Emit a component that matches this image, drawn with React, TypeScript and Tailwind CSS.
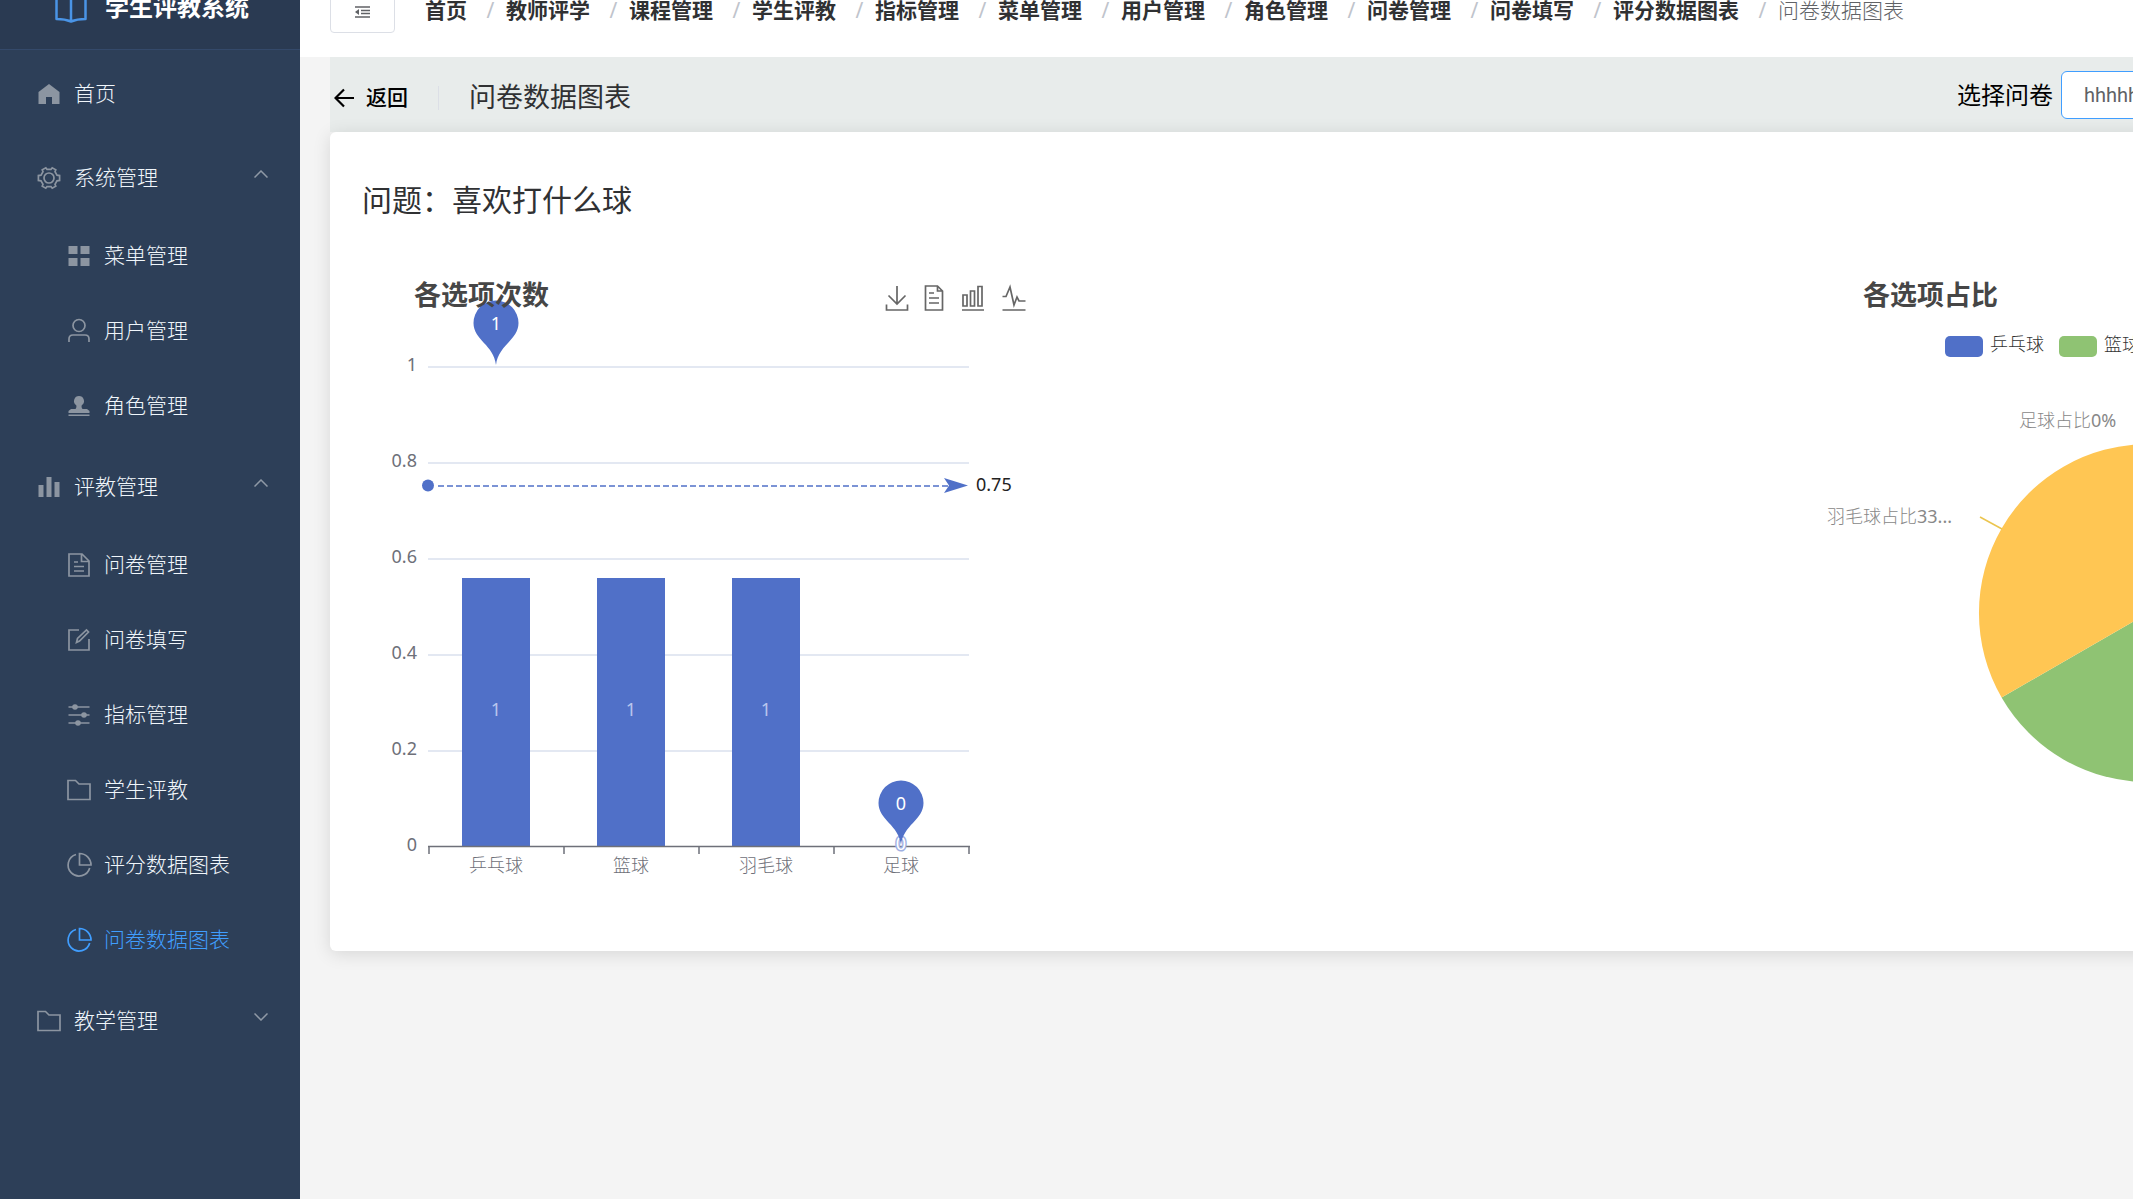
import React from "react";

type IconName = "home" | "gear" | "grid" | "user" | "stamp" | "bars" | "doc" | "edit" | "sliders" | "folder" | "pie";

const icons: Record<IconName, React.ReactNode> = {
  home: <path fill="currentColor" stroke="none" d="M12 2 22.500 10v12H15v-7H9v7H1.500V10z" />,
  gear: (
    <>
      <circle cx="12" cy="12" r="5" />
      <path d="M8.800 1.800 10 3.400h4l1.200-1.600 3.600 2-.8 2 2 3.400 2.600.4v4.800l-2.600.4-2 3.400.8 2-3.600 2-1.200-1.600h-4l-1.200 1.600-3.600-2 .8-2-2-3.400-2.600-.4V9.600l2.600-.4 2-3.400-.8-2z" />
    </>
  ),
  grid: <path fill="currentColor" stroke="none" d="M1.500 2h9v8h-9zM13.500 2h9v8h-9zM1.500 14h9v8h-9zM13.500 14h9v8h-9z" />,
  user: (
    <>
      <circle cx="12" cy="6.500" r="6" />
      <path d="M2 23v-3q0-4 4-4h12q4 0 4 4v3" />
    </>
  ),
  stamp: <path fill="currentColor" stroke="none" d="M12 2a5 5 0 0 1 3 9c-.8.8-.5 3 .5 4H20l2.500 2v2h-21v-2L4 15h4.500c1-1 1.300-3.200.5-4a5 5 0 0 1 3-9zM1.500 20.500h21V22h-21z" />,
  bars: <path fill="currentColor" stroke="none" d="M1.500 10h5v12h-5zM9.500 2h5v20h-5zM17.500 7h5v15h-5z" />,
  doc: <path d="M15 1H2v22h20V8zM14.500 1v7.500H22M7 9h4M7 13.500h10M7 18h10" />,
  edit: <path d="M12 2H2v20h20V11M9.500 14.500l1-4 9-8.500 2 2-9 9z" />,
  sliders: (
    <>
      <path d="M1.500 4h21M1.500 12h21M1.500 20h21" />
      <g fill="currentColor" stroke="none">
        <circle cx="8" cy="4" r="2.800" />
        <circle cx="17" cy="12" r="2.800" />
        <circle cx="11" cy="20" r="2.800" />
      </g>
    </>
  ),
  folder: <path d="M1 2.500h7.500l3.500 3.500h11v15.500H1z" />,
  pie: <path d="M9 1.500A11 11 0 1 0 22.700 15M12.500.5V12H24A11.500 11.500 0 0 0 12.500.5z" />,
};

function Icon({ name }: { name: IconName }) {
  return (
    <svg viewBox="0 0 24 24" className="size-6 overflow-visible" fill="none" stroke="currentColor" strokeWidth="1.700">
      {icons[name]}
    </svg>
  );
}

function Chevron({ open }: { open: boolean }) {
  return (
    <svg viewBox="0 0 14 8" className="mb-2 h-2 w-3.5 text-[#8f99a6]" fill="none" stroke="currentColor" strokeWidth="1.500">
      <path d={open ? "M.5 7.500 7 1l6.500 6.500" : "M.5.5 7 7 13.500.5"} />
    </svg>
  );
}

interface Leaf {
  icon: IconName;
  label: string;
  active?: boolean;
}
interface Group extends Leaf {
  open?: boolean;
  children?: Leaf[];
}

const menu: Group[] = [
  { icon: "home", label: "首页" },
  {
    icon: "gear",
    label: "系统管理",
    open: true,
    children: [
      { icon: "grid", label: "菜单管理" },
      { icon: "user", label: "用户管理" },
      { icon: "stamp", label: "角色管理" },
    ],
  },
  {
    icon: "bars",
    label: "评教管理",
    open: true,
    children: [
      { icon: "doc", label: "问卷管理" },
      { icon: "edit", label: "问卷填写" },
      { icon: "sliders", label: "指标管理" },
      { icon: "folder", label: "学生评教" },
      { icon: "pie", label: "评分数据图表" },
      { icon: "pie", label: "问卷数据图表", active: true },
    ],
  },
  { icon: "folder", label: "教学管理", open: false, children: [] },
];

function Sidebar() {
  return (
    <aside className="min-h-screen w-[300px] shrink-0 bg-[#2d3f58] text-[21px] font-light text-[#f0f6fb]">
      <div className="-mt-9 flex h-[86px] items-center gap-[18px] border-b border-[#34496a] bg-[#2a3a52] pl-[55px]">
        <svg viewBox="0 0 32 32" className="size-8" fill="none" stroke="#4a94e6" strokeWidth="2.500" strokeLinejoin="round">
          <path d="M1.500 2h11q3.500 0 3.500 3 0-3 3.500-3h11v26Q22 28 16 30.500 10 28 1.500 28zM16 5v25" />
        </svg>
        <span className="text-2xl font-bold text-white">学生评教系统</span>
      </div>
      <nav className="pt-0.5">
        {menu.map((g) => (
          <div key={g.label}>
            {g.children ? (
              <button type="button" aria-expanded={g.open} className="flex h-[84px] w-full items-center pr-8 pl-[37px]">
                <span className="text-[#8c95a1]"><Icon name={g.icon} /></span>
                <span className="ml-[13px] flex-1 text-left">{g.label}</span>
                <Chevron open={!!g.open} />
              </button>
            ) : (
              <a href="#" className="flex h-[84px] items-center pl-[37px]">
                <span className="text-[#8c95a1]"><Icon name={g.icon} /></span>
                <span className="ml-[13px]">{g.label}</span>
              </a>
            )}
            {g.children?.map((c) => (
              <a key={c.label} href="#" className={c.active ? "flex h-[75px] items-center pb-1 pl-[67px] text-[#409eff]" : "flex h-[75px] items-center pb-1 pl-[67px]"}>
                <span className={c.active ? "text-[#409eff]" : "text-[#8c95a1]"}><Icon name={c.icon} /></span>
                <span className="ml-[13px]">{c.label}</span>
              </a>
            ))}
          </div>
        ))}
      </nav>
    </aside>
  );
}

const crumbs = ["首页", "教师评学", "课程管理", "学生评教", "指标管理", "菜单管理", "用户管理", "角色管理", "问卷管理", "问卷填写", "评分数据图表"];

function TopBar() {
  return (
    <header className="-mt-[33px] flex h-[90px] items-center bg-white pl-[30px]">
      <button type="button" aria-label="折叠菜单" className="flex h-[42px] w-[65px] items-center justify-center rounded border border-[#dcdfe6] bg-white text-[#606266]">
        <svg viewBox="0 0 15 12" className="h-3 w-[15px]" fill="none" stroke="currentColor" strokeWidth="1.500">
          <path d="M0 1h15M6 4.500h9M6 7.500h9M0 11h15" />
          <path d="M4 3v6L0 6z" fill="currentColor" stroke="none" />
        </svg>
      </button>
      <nav aria-label="面包屑" className="-mt-1 ml-[30px] flex items-center text-[21px] leading-8 whitespace-nowrap text-[#303133]">
        {crumbs.map((c) => (
          <React.Fragment key={c}>
            <a href="#" className="font-bold">{c}</a>
            <span className="w-[39px] pl-2 text-center text-[#c0c4cc]">/</span>
          </React.Fragment>
        ))}
        <span className="font-light text-[#606266]">问卷数据图表</span>
      </nav>
    </header>
  );
}

function PageHeader() {
  return (
    <div className="flex h-[75px] items-center bg-[#e8eceb]">
      <div className="flex items-center pt-1.5">
        <button type="button" className="flex items-center gap-3 pl-1 text-[21px] font-medium text-black">
          <svg viewBox="0 0 20 20" className="size-5" fill="none" stroke="currentColor" strokeWidth="2.200">
            <path d="M20 10H2M10 1.500 1.500 10l8.500 8.500" />
          </svg>
          返回
        </button>
        <span className="mx-[30px] h-6 w-px bg-[#dcdfe6]" />
        <h1 className="text-[27px] text-[#303133]">问卷数据图表</h1>
      </div>
      <label htmlFor="survey" className="mr-2 ml-auto text-2xl text-black">选择问卷</label>
      <select id="survey" className="h-12 w-[272px] appearance-none rounded-md border border-[#409eff] bg-white px-[22px] font-[Roboto,sans-serif] text-xl text-[#606266]">
        <option>hhhhhhh</option>
      </select>
    </div>
  );
}

const tools = [
  { label: "下载", d: "M12 0v17M3.500 9.500 12 18l8.500-8.500M1.500 18.500V24h21v-5.500" },
  { label: "数据视图", d: "M13.500 0H1.500v24h17V5zM13.500 0v5h5M5 7h5M5 12h10M5 17h10" },
  { label: "柱状图", d: "M-1 24h22M0 9h4v11H0zM7.500 5h4v15h-4zM15 .5h4V20h-4z" },
  { label: "折线图", d: "M.5 24h23M.5 10.500H4l4-9.500 4 18 3-8 2 4h6.500" },
];

function Pin({ x, y, text }: { x: number; y: number; text: string }) {
  return (
    <g transform={`translate(${x} ${y})`}>
      <path fill="#5070c8" d="M0 0C-2-20-22.500-25-22.500-42A22.500 22.500 0 0 1 22.500-42C22.500-25 2-20 0 0z" />
      <text y="-35" textAnchor="middle" fill="#fff">{text}</text>
    </g>
  );
}

const categories = ["乒乓球", "篮球", "羽毛球", "足球"];
const axisTicks = ["1", "0.8", "0.6", "0.4", "0.2", "0"];

function BarChart() {
  return (
    <figure className="w-[680px] shrink-0">
      <figcaption className="relative z-10 flex h-10 items-center">
        <h2 className="ml-[34px] text-[27px] font-bold text-[#464646]">各选项次数</h2>
        <div className="mr-[34px] ml-auto flex gap-[15px]">
          {tools.map((t) => (
            <button key={t.label} type="button" aria-label={t.label} className="mt-1.5 text-[#666]">
              <svg viewBox="0 0 24 24" className="size-6 overflow-visible" fill="none" stroke="currentColor" strokeWidth="1.700">
                <path d={t.d} />
              </svg>
            </button>
          ))}
        </div>
      </figcaption>
      <svg viewBox="380 295 680 590" className="-mt-5 block h-[590px] w-[680px] text-lg" role="img" aria-label="各选项次数">
        {axisTicks.map((t, i) => (
          <g key={t}>
            {i < 5 && <path d={`M428 ${367 + i * 96}H969`} stroke="#e3e8f2" strokeWidth="2" />}
            <text x="417" y={371 + i * 96} textAnchor="end" fill="#6e7079">{t}</text>
          </g>
        ))}
        {[496, 631, 766].map((x) => (
          <g key={x}>
            <rect x={x - 34} y="578" width="68" height="268" fill="#5070c8" />
            <text x={x} y="716" textAnchor="middle" fill="#b9c6ee">1</text>
          </g>
        ))}
        <path d="M428 846.500H970M429 846v8M564 846v8M699 846v8M834 846v8M969 846v8" stroke="#6e7079" strokeWidth="1.500" fill="none" />
        {categories.map((c, i) => (
          <text key={c} x={496 + i * 135} y="872" textAnchor="middle" fill="#6e7079" className="font-light">{c}</text>
        ))}
        <circle cx="428" cy="485.500" r="6" fill="#5070c8" />
        <path d="M438 486H948" stroke="#5070c8" strokeWidth="1.500" strokeDasharray="6 3" />
        <path d="M968 485.500 944 478l5 7.500-5 7.500z" fill="#5070c8" />
        <text x="976" y="491" fill="#222">0.75</text>
        <text x="901" y="850" textAnchor="middle" fill="#fff" stroke="#9fb0e2" strokeWidth="3" paintOrder="stroke">0</text>
        <Pin x={496} y={365} text="1" />
        <Pin x={901} y={845} text="0" />
      </svg>
    </figure>
  );
}

function PieChart() {
  return (
    <figure className="w-[480px] shrink-0">
      <figcaption className="flex h-10 items-center">
        <h2 className="ml-[43px] text-[27px] font-bold text-[#464646]">各选项占比</h2>
      </figcaption>
      <svg viewBox="1820 315 480 590" className="block h-[590px] w-[480px] text-lg font-light" role="img" aria-label="各选项占比">
        <rect x="1945" y="336" width="38" height="21" rx="5" fill="#5070c8" />
        <text x="1990" y="351" fill="#333">乒乓球</text>
        <rect x="2059" y="336" width="38" height="21" rx="5" fill="#8fc373" />
        <text x="2104" y="351" fill="#333">篮球</text>
        <path d="M2148 613V444A169 169 0 0 1 2294.400 697.500z" fill="#5070c8" />
        <path d="M2148 613 2294.400 697.500A169 169 0 0 1 2001.600 697.500z" fill="#8fc373" />
        <path d="M2148 613 2001.600 697.500A169 169 0 0 1 2148 444z" fill="#ffc653" />
        <path d="M1980 517 2002 529" stroke="#ebc54f" strokeWidth="1.500" />
        <text x="2019" y="427" fill="#888">足球占比<tspan className="font-normal">0%</tspan></text>
        <text x="1827" y="523" fill="#888">羽毛球占比<tspan className="font-normal">33...</tspan></text>
      </svg>
    </figure>
  );
}

export default function App() {
  return (
    <div className="flex min-h-screen overflow-hidden bg-[#f4f4f4] font-['Noto_Sans','Noto_Sans_CJK_SC',sans-serif]">
      <Sidebar />
      <div className="min-w-0 flex-1">
        <TopBar />
        <main className="-mr-[200px] pl-[30px]">
          <PageHeader />
          <section className="rounded-md bg-white pt-[45px] pb-[46px] shadow-[0_3px_18px_rgba(0,0,0,0.12)]">
            <h2 className="pl-8 text-[30px] leading-[45px] text-[#303133]">问题：喜欢打什么球</h2>
            <div className="flex justify-between pt-[53px] pr-[33px] pl-[50px]">
              <BarChart />
              <PieChart />
            </div>
          </section>
        </main>
      </div>
    </div>
  );
}
